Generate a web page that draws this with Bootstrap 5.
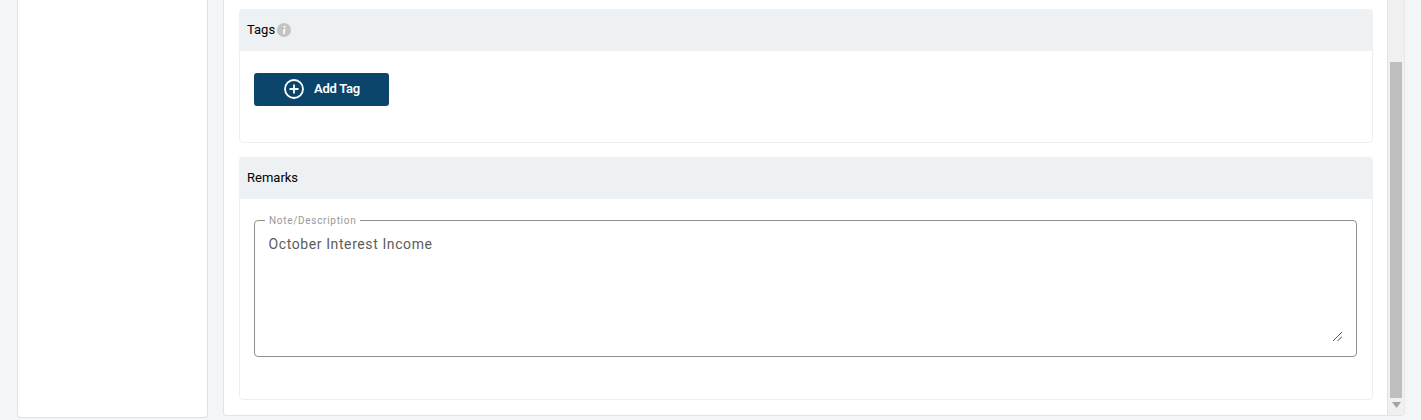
<!DOCTYPE html>
<html lang="en">
<head>
<meta charset="utf-8">
<title>Transaction</title>
<link rel="stylesheet" href="https://cdn.jsdelivr.net/npm/bootstrap@5.3.0/dist/css/bootstrap.min.css">
<style>
html,body{height:420px;overflow:hidden}
body{background:#f3f5f7;font-family:Roboto,"Liberation Sans",sans-serif;color:#000}
.shell{height:420px;padding:0 16px 0 17px;gap:15px}
.side-panel{width:191px;height:418px;background:#fff;border:1px solid #dee2e6;border-top:0;border-radius:0 0 4px 4px}
.main-panel{width:1182px;height:416px;background:#fff;border:1px solid #dfe6e8;border-top:0;border-radius:0 0 4px 4px}
.main-content{width:1165px;padding:9px 14px 0 15px;gap:14px}
.sec-card{border:1px solid #eceff1;border-radius:4px;background:#fff}
.sec-head{height:42px;background:#eef1f4;padding-left:8px;font-size:13px;line-height:42px;margin:-1px -1px 0;border-radius:4px 4px 0 0;gap:2px}
.tags-card{height:134px}
.remarks-card{height:243px}
.info-dot{width:14px;height:14px;flex:none}
.add-btn{width:135px;height:33px;margin:22px 0 0 14px;background:#0c456c;color:#fff;border-radius:3px;font-size:13px;font-weight:600;letter-spacing:-.25px;gap:10px;padding:0 0 1px 1px}
.add-btn:hover{background:#0c456c;color:#fff}
.note-box{margin:21px 15px 0 14px;height:137px;border:1px solid #8f8f8f;border-radius:4px;position:relative;padding:8px 13.5px}
.note-label{position:absolute;top:-7px;left:10px;padding:0 4px;background:#fff;font-size:10px;line-height:13px;color:#999;letter-spacing:.7px}
.note-text{font-size:14px;line-height:30px;color:#5c5c5c;letter-spacing:.6px}
.grip{position:absolute;right:14px;bottom:15px;width:9px;height:9px}
.fake-bar{width:18px;height:415px;margin-right:-1px;background:#f0f0f0;border-left:1px solid #e3e3e3;border-right:1px solid #e4e9e9;padding:0 2px}
.fake-track{height:62px;flex:none}
.fake-thumb{height:336px;background:#bebebe}
.fake-arrow{width:9px;height:6px;margin:4px auto 0;display:block}
</style>
</head>
<body>
<div class="shell d-flex align-items-start">
  <aside class="side-panel"></aside>
  <main class="main-panel d-flex justify-content-between">
    <div class="main-content d-flex flex-column">
      <section class="sec-card tags-card">
        <div class="sec-head d-flex align-items-center">
          <span>Tags</span>
          <svg class="info-dot" viewBox="0 0 14 14" aria-hidden="true"><circle cx="7" cy="7" r="7" fill="#c4c4c4"/><circle cx="7.5" cy="3.8" r="1.1" fill="#fff"/><path d="M6.5 6h2l-.9 5H5.9z" fill="#fff"/></svg>
        </div>
        <button type="button" class="btn add-btn d-flex align-items-center justify-content-center">
          <svg width="20" height="20" viewBox="0 0 20 20" aria-hidden="true"><circle cx="10" cy="10" r="9" fill="none" stroke="#fff" stroke-width="1.8"/><path d="M10 5.5v9M5.5 10h9" stroke="#fff" stroke-width="1.8"/></svg>
          <span>Add Tag</span>
        </button>
      </section>
      <section class="sec-card remarks-card">
        <div class="sec-head d-flex align-items-center">Remarks</div>
        <div class="note-box">
          <span class="note-label">Note/Description</span>
          <div class="note-text">October Interest Income</div>
          <svg class="grip" viewBox="0 0 9 9" aria-hidden="true"><path d="M0 9L9 0M4.5 9L9 4.5" stroke="#555" stroke-width="1" fill="none"/></svg>
        </div>
      </section>
    </div>
    <div class="fake-bar d-flex flex-column">
      <div class="fake-track"></div>
      <div class="fake-thumb"></div>
      <svg class="fake-arrow" viewBox="0 0 9 6" aria-hidden="true"><path d="M0 0h9L4.5 6z" fill="#a3a3a3"/></svg>
    </div>
  </main>
</div>
<script src="https://cdn.jsdelivr.net/npm/bootstrap@5.3.0/dist/js/bootstrap.bundle.min.js"></script>
</body>
</html>
